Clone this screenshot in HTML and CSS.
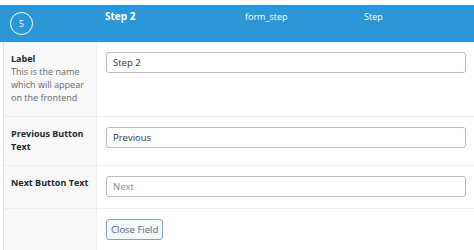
FILE: index.html
```html
<!DOCTYPE html>
<html lang="en">
<head>
    <meta charset="UTF-8">
    <meta name="viewport" content="width=device-width, initial-scale=1.0">
    <title>Form Step Field</title>
    <link rel="stylesheet" href="styles.css">
</head>
<body>
    <div class="field-head">
        <div class="head-order"><span class="order-badge">5</span></div>
        <div class="head-cell head-label">Step 2</div>
        <div class="head-cell">form_step</div>
        <div class="head-cell">Step</div>
    </div>
    <div class="field-settings">
        <div class="setting-row">
            <div class="setting-label">
                <strong>Label</strong>
                <p>This is the name which will appear on the frontend</p>
            </div>
            <div class="setting-input">
                <input type="text" value="Step 2">
            </div>
        </div>
        <div class="setting-row">
            <div class="setting-label">
                <strong>Previous Button Text</strong>
            </div>
            <div class="setting-input">
                <input type="text" value="Previous">
            </div>
        </div>
        <div class="setting-row">
            <div class="setting-label">
                <strong>Next Button Text</strong>
            </div>
            <div class="setting-input">
                <input type="text" placeholder="Next">
            </div>
        </div>
        <div class="setting-row">
            <div class="setting-label"></div>
            <div class="setting-input">
                <button type="button" class="close-btn">Close Field</button>
            </div>
        </div>
    </div>
</body>
</html>
```

FILE: styles.css
```css
body {
    font-family: "Open Sans", Arial, sans-serif;
    font-size: 9px;
    margin: 0;
    padding: 5px 0 0;
    background: #fff;
    color: #3c434a;
}
.field-head {
    display: grid;
    grid-template-columns: 97px 140px 119px 1fr;
    height: 37px;
    background: #2b97d6;
    color: #fff;
}
.head-order {
    display: flex;
    align-items: center;
    padding-left: 10px;
}
.order-badge {
    display: flex;
    align-items: center;
    justify-content: center;
    width: 21px;
    height: 21px;
    border: 1px solid #fff;
    border-radius: 50%;
    font-size: 8.5px;
}
.head-cell {
    padding: 5px 8px 0;
    line-height: 13px;
}
.head-label {
    font-weight: 700;
    font-size: 10px;
}
.field-settings {
    margin-left: 3px;
    border-left: 1px solid #e2e4e7;
    border-bottom: 1px solid #e2e4e7;
}
.setting-row {
    display: grid;
    grid-template-columns: 93px 1fr;
    border-top: 1px solid #eee;
}
.setting-row:first-child {
    border-top: 0;
}
.setting-label {
    background: #f9f9f9;
    padding: 10px 6px 12px 7px;
    line-height: 13px;
    border-right: 1px solid #f0f0f1;
}
.setting-label strong {
    display: block;
    color: #23282d;
    font-weight: 700;
}
.setting-label p {
    margin: 0;
    color: #646970;
}
.setting-input {
    padding: 10px 8px 11px 9px;
}
.setting-input input {
    display: block;
    box-sizing: border-box;
    width: 100%;
    height: 21px;
    padding: 0 6px;
    font-family: inherit;
    font-size: 9.5px;
    color: #32373c;
    border: 1px solid #bbb;
    border-radius: 3px;
    background: #fff;
}
.setting-input input::placeholder {
    color: #7e8993;
}
.close-btn {
    height: 21px;
    padding: 0 4px;
    font-family: inherit;
    font-size: 9.5px;
    color: #49698a;
    background: #f6f7f7;
    border: 1px solid #7ea7c8;
    border-radius: 3px;
}
```
